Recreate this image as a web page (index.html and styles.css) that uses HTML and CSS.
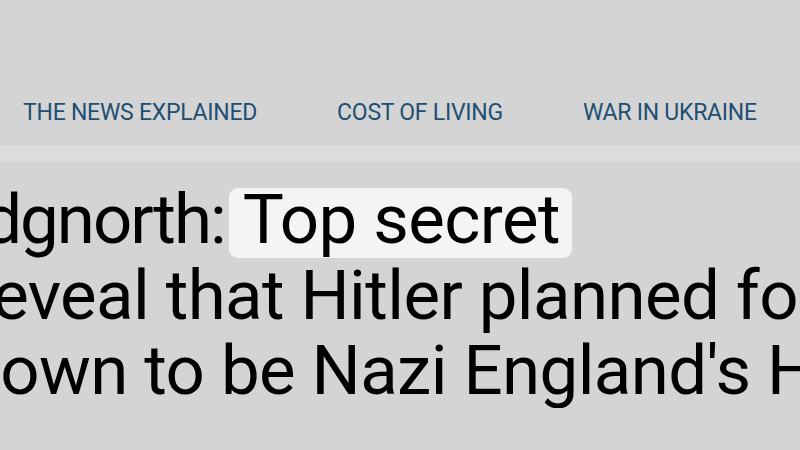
FILE: index.html
```html
<!DOCTYPE html>
<html lang="en">
<head>
  <meta charset="UTF-8">
  <meta name="viewport" content="width=device-width, initial-scale=1.0">
  <title>Bridgnorth: Top secret</title>
  <link rel="stylesheet" href="styles.css">
</head>
<body>
  <header class="site-header">
    <nav class="topics">
      <a href="#">The news explained</a>
      <a href="#">Cost of living</a>
      <a href="#">War in Ukraine</a>
    </nav>
  </header>
  <div class="divider"></div>

  <main>
    <h1 class="headline">
      <span class="line line-1">Bridgnorth:<mark class="highlight">Top secret</mark></span>
      <span class="line line-2">reveal that Hitler planned for the</span>
      <span class="line line-3">town to be Nazi England's HQ</span>
    </h1>
  </main>
</body>
</html>
```

FILE: styles.css
```css
/* General */
* {
  margin: 0;
  padding: 0;
  box-sizing: border-box;
}

body {
  background-color: #d4d4d4;
  color: #000;
  font-family: Roboto, "Liberation Sans", sans-serif;
  width: 800px;
  height: 450px;
  overflow: hidden;
}

/* Topic bar */
.site-header {
  height: 145px;
  padding-top: 100px;
}

.topics {
  display: flex;
  gap: 80px;
  padding-left: 23px;
}

.topics a {
  color: #1e4f74;
  text-decoration: none;
  text-transform: uppercase;
  font-size: 23px;
  letter-spacing: -0.25px;
  line-height: 26px;
}

.divider {
  height: 17px;
  background-color: #dcdcdc;
}

/* Headline */
main {
  padding-top: 20px;
}

.headline {
  font-size: 69px;
  font-weight: 400;
  letter-spacing: -0.6px;
  line-height: 75px;
  white-space: nowrap;
  overflow: hidden;
}

.line {
  display: block;
}

.line-1 {
  margin-left: -94px;
  letter-spacing: -2px;
}

.line-2 {
  margin-left: -30px;
}

.line-3 {
  margin-left: -21px;
}

.highlight {
  display: inline-block;
  background-color: #f4f4f4;
  color: #000;
  border-radius: 9px;
  margin-left: 4px;
  padding: 0 12px 6px 14px;
  letter-spacing: -0.6px;
  line-height: 64px;
}
```
